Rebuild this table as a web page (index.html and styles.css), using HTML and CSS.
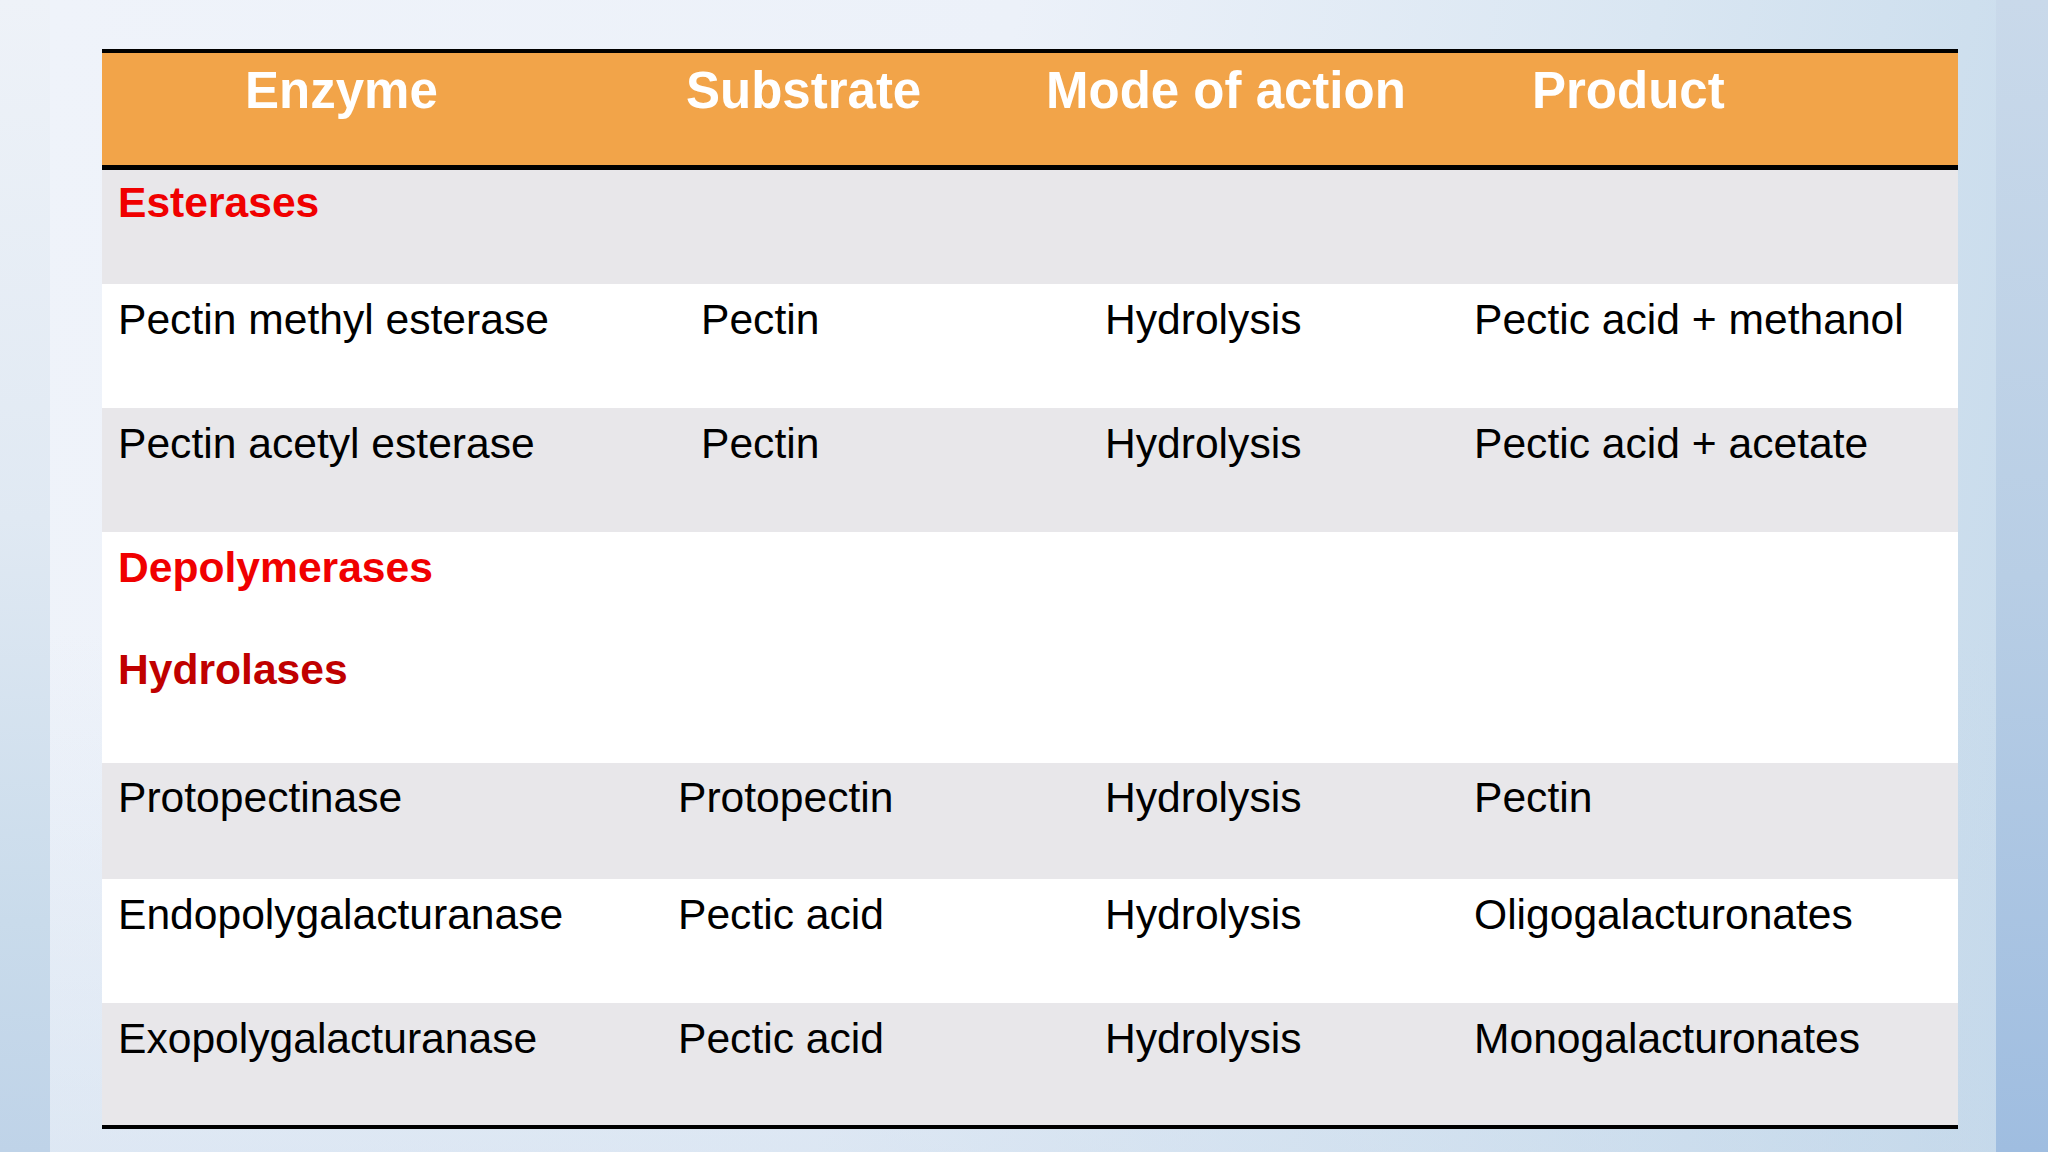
FILE: index.html
```html
<!DOCTYPE html>
<html lang="en">
<head>
<meta charset="utf-8">
<title>Pectic enzymes</title>
<link rel="stylesheet" href="styles.css">
</head>
<body>
<div class="slide">
  <div class="strip strip-left"></div>
  <main class="main">
    <div class="table">
      <div class="head">
        <div class="hcell">Enzyme</div>
        <div class="hcell">Substrate</div>
        <div class="hcell">Mode of action</div>
        <div class="hcell">Product</div>
      </div>
      <div class="row gray r-est">
        <div class="cell group red">Esterases</div>
      </div>
      <div class="row white r-std">
        <div class="cell">Pectin methyl esterase</div>
        <div class="cell indent">Pectin</div>
        <div class="cell">Hydrolysis</div>
        <div class="cell">Pectic acid + methanol</div>
      </div>
      <div class="row gray r-std">
        <div class="cell">Pectin acetyl esterase</div>
        <div class="cell indent">Pectin</div>
        <div class="cell">Hydrolysis</div>
        <div class="cell">Pectic acid + acetate</div>
      </div>
      <div class="row white r-dep">
        <div class="cell group">
          <div class="red">Depolymerases</div>
          <div class="darkred sub">Hydrolases</div>
        </div>
      </div>
      <div class="row gray r-proto">
        <div class="cell">Protopectinase</div>
        <div class="cell">Protopectin</div>
        <div class="cell">Hydrolysis</div>
        <div class="cell">Pectin</div>
      </div>
      <div class="row white r-std">
        <div class="cell">Endopolygalacturanase</div>
        <div class="cell">Pectic acid</div>
        <div class="cell">Hydrolysis</div>
        <div class="cell">Oligogalacturonates</div>
      </div>
      <div class="row gray r-last">
        <div class="cell">Exopolygalacturanase</div>
        <div class="cell">Pectic acid</div>
        <div class="cell">Hydrolysis</div>
        <div class="cell">Monogalacturonates</div>
      </div>
    </div>
  </main>
  <div class="strip strip-right"></div>
</div>
</body>
</html>
```
FILE: styles.css
```css
html, body {
  margin: 0;
  padding: 0;
}
body {
  width: 2048px;
  height: 1152px;
  overflow: hidden;
  font-family: "Liberation Sans", Arial, sans-serif;
}
.slide {
  display: flex;
  width: 2048px;
  height: 1152px;
}
.strip {
  flex: none;
  height: 100%;
}
.strip-left {
  width: 50px;
  background: linear-gradient(180deg, #eef2f8 0%, #e0e9f3 45%, #c9dbeb 80%, #bfd3e8 100%);
}
.strip-right {
  width: 52px;
  background: linear-gradient(180deg, #c9d9ea 0%, #b8cee5 50%, #9fbde0 100%);
}
.main {
  flex: 1;
  height: 100%;
  padding: 49px 0 0 52px;
  box-sizing: border-box;
  background:
    linear-gradient(180deg, rgba(255,255,255,0) 55%, rgba(196,215,234,0.4) 100%),
    linear-gradient(100deg, #eff3fa 0%, #ecf1f9 45%, #d9e6f2 75%, #c6daeb 100%);
}
.table {
  width: 1856px;
  border-top: 4px solid #000;
  border-bottom: 4px solid #000;
}
.head {
  display: grid;
  grid-template-columns: 441px 360px 486px 1fr;
  padding-left: 143px;
  height: 112px;
  background: #f2a449;
  border-bottom: 5px solid #000;
}
.hcell {
  color: #fff;
  font-weight: bold;
  font-size: 51px;
  line-height: 1.15;
  padding-top: 9px;
  white-space: nowrap;
}
.row {
  display: grid;
  grid-template-columns: 564px 427px 369px 1fr;
  box-sizing: border-box;
}
.gray { background: #e8e7ea; }
.white { background: #ffffff; }
.r-est { height: 114px; }
.r-std { height: 124px; }
.r-dep { height: 231px; }
.r-proto { height: 116px; }
.r-last { height: 122px; }
.cell {
  font-size: 42.6px;
  line-height: 1.15;
  color: #000;
  padding: 11px 0 0 12px;
  white-space: nowrap;
}
.cell:first-child { padding-left: 16px; }
.r-est .cell { padding-top: 8px; }
.r-proto .cell { padding-top: 10px; }
.cell.indent { padding-left: 35px; }
.group {
  grid-column: 1 / -1;
  font-weight: bold;
}
.red { color: #f00000; }
.darkred { color: #c00000; }
.sub { margin-top: 53px; }
```
